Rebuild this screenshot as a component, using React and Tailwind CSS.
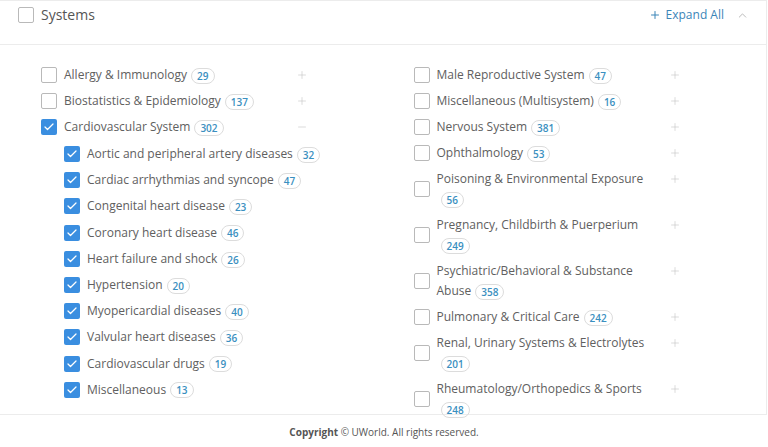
import { Check, Plus, Minus, ChevronUp } from 'lucide-react';

const left = [
  { name: 'Allergy & Immunology', count: 29 },
  { name: 'Biostatistics & Epidemiology', count: 137 },
  {
    name: 'Cardiovascular System',
    count: 302,
    checked: true,
    open: true,
    children: [
      { name: 'Aortic and peripheral artery diseases', count: 32 },
      { name: 'Cardiac arrhythmias and syncope', count: 47 },
      { name: 'Congenital heart disease', count: 23 },
      { name: 'Coronary heart disease', count: 46 },
      { name: 'Heart failure and shock', count: 26 },
      { name: 'Hypertension', count: 20 },
      { name: 'Myopericardial diseases', count: 40 },
      { name: 'Valvular heart diseases', count: 36 },
      { name: 'Cardiovascular drugs', count: 19 },
      { name: 'Miscellaneous', count: 13 },
    ],
  },
];

const right = [
  { name: 'Male Reproductive System', count: 47 },
  { name: 'Miscellaneous (Multisystem)', count: 16 },
  { name: 'Nervous System', count: 381 },
  { name: 'Ophthalmology', count: 53 },
  { name: 'Poisoning & Environmental Exposure', count: 56 },
  { name: 'Pregnancy, Childbirth & Puerperium', count: 249 },
  { name: 'Psychiatric/Behavioral & Substance Abuse', count: 358 },
  { name: 'Pulmonary & Critical Care', count: 242 },
  { name: 'Renal, Urinary Systems & Electrolytes', count: 201 },
  { name: 'Rheumatology/Orthopedics & Sports', count: 248 },
];

function Box({ checked }) {
  return checked ? (
    <span className="flex h-4 w-4 shrink-0 items-center justify-center rounded-[2px] bg-[#3a8ee0]">
      <Check size={12} strokeWidth={2.5} className="text-white" />
    </span>
  ) : (
    <span className="h-4 w-4 shrink-0 rounded-[2px] border border-[#b9b9b9] bg-white" />
  );
}

function Badge({ n }) {
  return (
    <span className="ml-1 inline-flex h-4 items-center rounded-full border border-[#dcdcdc] px-[5px] align-middle text-[10px] font-semibold leading-none text-[#3a8fc0]">
      {n}
    </span>
  );
}

function Row({ item, sub }) {
  return (
    <div className="flex items-center gap-[7px]">
      <Box checked={item.checked || sub} />
      <div className={sub ? 'text-[12px] leading-5 text-[#606060]' : 'w-[221px] text-[12px] leading-5 text-[#606060]'}>
        {item.name}
        <Badge n={item.count} />
      </div>
      {!sub && (
        <span className="flex w-5 self-start justify-center pt-1 text-[#c4c4c4]">
          {item.open ? <Minus size={12} strokeWidth={1.2} /> : <Plus size={12} strokeWidth={1.2} />}
        </span>
      )}
    </div>
  );
}

export default function App() {
  return (
    <div className="h-[447px] w-[768px] overflow-hidden bg-white font-['Open_Sans',sans-serif]">
      <div className="mr-[1px] border-r border-t border-b border-[#ececec]">
        <div className="flex h-[44px] items-start border-b border-[#ececec] pl-[18px] pr-[17px] pt-[6px]">
          <Box />
          <span className="ml-[7px] text-[14px] leading-4 text-[#555]">Systems</span>
          <div className="ml-auto flex items-center text-[12px] leading-4 text-[#3b85b8]">
            <Plus size={12} strokeWidth={2} />
            <span className="ml-[5px]">Expand All</span>
            <ChevronUp size={13} strokeWidth={1.5} className="ml-[12px] text-[#aaa]" />
          </div>
        </div>
        <div className="grid h-[369px] grid-cols-2 pl-[41px] pt-[20px]">
          <div className="flex flex-col gap-[6px]">
            {left.map((it) => (
              <div key={it.name} className="flex flex-col gap-[6px]">
                <Row item={it} />
                {it.children && (
                  <div className="flex flex-col gap-[6.2px] pl-[23px] pt-[1px]">
                    {it.children.map((c) => (
                      <Row key={c.name} item={c} sub />
                    ))}
                  </div>
                )}
              </div>
            ))}
          </div>
          <div className="flex flex-col gap-[6px] pl-[10px]">
            {right.map((it) => (
              <Row key={it.name} item={it} />
            ))}
          </div>
        </div>
      </div>
      <div className="pt-[10px] text-center text-[10px] text-[#555]">
        <span className="font-bold">Copyright</span> © UWorld. All rights reserved.
      </div>
    </div>
  );
}
